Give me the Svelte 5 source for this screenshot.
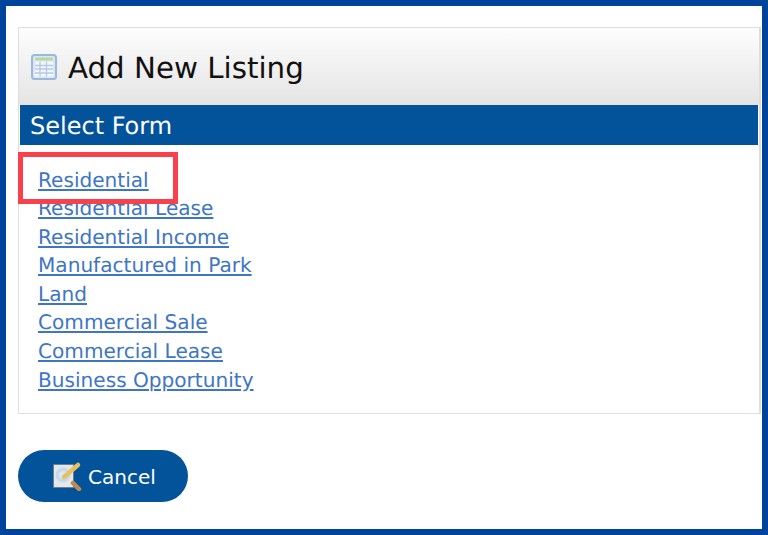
<script lang="ts">
  const forms = [
    'Residential',
    'Residential Lease',
    'Residential Income',
    'Manufactured in Park',
    'Land',
    'Commercial Sale',
    'Commercial Lease',
    'Business Opportunity'
  ];
</script>

<div class="frame">
  <section class="panel">
    <header class="title">
      <svg class="title-icon" width="26" height="26" viewBox="0 0 26 26" aria-hidden="true">
        <rect x="1" y="1" width="24" height="24" rx="2.500" fill="#dde7f4" stroke="#9ab8df" stroke-width="2" />
        <rect x="4" y="3.500" width="18" height="3" fill="#b3dba0" />
        <rect x="4" y="7.500" width="18" height="15" fill="#f3f6fa" />
        <path d="M4 11.500h18M4 15h18M4 19h18M9 7.500v15M15.500 7.500v15" stroke="#b4cae5" stroke-width="1.300" fill="none" />
      </svg>
      <h1>Add New Listing</h1>
    </header>
    <h2>Select Form</h2>
    <ul>
      {#each forms as form}
        <li><a href="#top">{form}</a></li>
      {/each}
    </ul>
    <div class="callout"></div>
  </section>

  <button class="cancel" type="button">
    <svg width="30" height="30" viewBox="0 0 30 30" aria-hidden="true">
      <rect x="1.500" y="3.500" width="20" height="23" fill="#e4e7ea" stroke="#6f7d8c" stroke-width="1" />
      <circle cx="11" cy="14" r="7.500" fill="#c4d9ee" />
      <circle cx="11" cy="14" r="4" fill="#dbe6f1" />
      <path d="M12 16 L26 4" stroke="#e8c060" stroke-width="4.500" stroke-linecap="round" />
      <path d="M21 22 L27 28" stroke="#c08a4f" stroke-width="4.500" stroke-linecap="round" />
    </svg>
    <span>Cancel</span>
  </button>
</div>

<style>
  :global(body) {
    margin: 0;
  }

  .frame {
    position: relative;
    box-sizing: border-box;
    width: 768px;
    height: 535px;
    padding: 21px 1px 0 12px;
    border: 6px solid #00439c;
    background: #fff;
    font-family: "DejaVu Sans", sans-serif;
    text-rendering: geometricPrecision;
  }

  .panel {
    position: relative;
    box-sizing: border-box;
    height: 387px;
    padding: 0 1px;
    border: 1px solid #dedede;
    border-right-width: 2px;
  }

  .title {
    display: flex;
    align-items: center;
    gap: 11px;
    height: 77px;
    margin: 0 -1px;
    padding-left: 12px;
    background: linear-gradient(#fdfdfd, #e4e4e4);
  }

  .title-icon {
    flex: none;
  }

  h1 {
    margin: 0;
    padding-top: 2px;
    color: #111;
    font-size: 29.300px;
    font-weight: 400;
  }

  h2 {
    height: 40px;
    margin: 0;
    padding-left: 10px;
    background: #03539b;
    color: #fff;
    font-size: 24px;
    font-weight: 400;
    line-height: 43px;
  }

  ul {
    margin: 0;
    padding: 20.500px 0 0 18px;
    list-style: none;
  }

  li {
    height: 28.600px;
    font-size: 20.100px;
    line-height: 28.600px;
  }

  a {
    color: #3f76c4;
  }

  .callout {
    position: absolute;
    left: -1px;
    top: 123.500px;
    box-sizing: border-box;
    width: 160px;
    height: 52px;
    border: 5px solid #f8414a;
  }

  .cancel {
    display: flex;
    align-items: center;
    gap: 6px;
    width: 170px;
    height: 52px;
    margin-top: 36px;
    padding: 0 0 0 34px;
    border: 0;
    border-radius: 26px;
    background: #03539b;
    color: #fff;
    font: inherit;
    font-size: 20px;
  }

  .cancel span {
    padding-top: 2px;
  }
</style>
